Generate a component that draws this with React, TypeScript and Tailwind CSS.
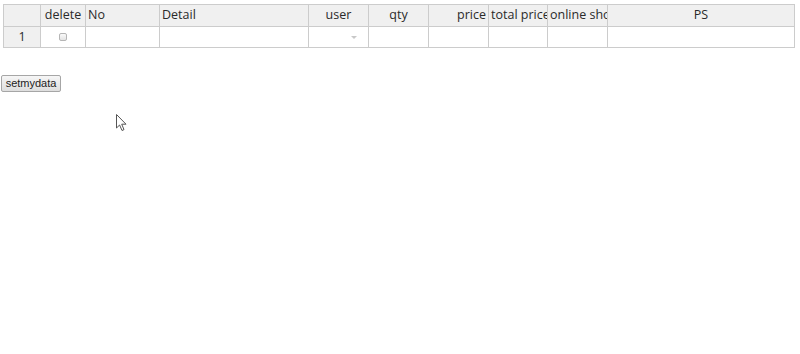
const columns = [
  { title: "delete", w: "w-[45px]", align: "justify-center" },
  { title: "No", w: "w-[74px]", align: "justify-start pl-[2px]" },
  { title: "Detail", w: "w-[149px]", align: "justify-start pl-[2px]" },
  { title: "user", w: "w-[60px]", align: "justify-center" },
  { title: "qty", w: "w-[60px]", align: "justify-center" },
  { title: "price", w: "w-[60px]", align: "justify-end pr-[2px]" },
  { title: "total price", w: "w-[59px]", align: "justify-start pl-[2px]" },
  { title: "online shop", w: "w-[60px]", align: "justify-start pl-[2px]" },
  { title: "PS", w: "w-[187px]", align: "justify-center" },
];

const Cursor = () => (
  <svg
    className="absolute left-[116px] top-[114px]"
    width="11"
    height="18"
    viewBox="0 0 11 18"
  >
    <path
      d="M0.5 0.5 L0.5 14 L3.6 11 L6 16.5 L8 15.6 L5.7 10.2 L10 10.2 Z"
      fill="#fff"
      stroke="#555"
      strokeWidth="1"
      strokeLinejoin="round"
    />
  </svg>
);

export default function App() {
  return (
    <div className="relative w-[800px] h-[354px] bg-white font-['Open_Sans',sans-serif] text-[12.5px] text-[#2a2a2a]">
      <div className="pt-[4px] pl-[3px]">
        <div className="inline-flex flex-col border-l border-t border-[#cccccc]">
          {/* header row */}
          <div className="flex h-[22px]">
            <div className="w-[37px] bg-[#f0f0f0] border-r border-b border-[#cccccc]" />
            {columns.map((c) => (
              <div
                key={c.title}
                className={`${c.w} ${c.align} flex items-center overflow-hidden whitespace-nowrap bg-[#f0f0f0] border-r border-b border-[#cccccc] leading-none`}
              >
                {c.title}
              </div>
            ))}
          </div>
          {/* data row */}
          <div className="flex h-[21px]">
            <div className="w-[37px] flex items-center justify-center bg-[#f0f0f0] border-r border-b border-[#cccccc] leading-none">
              1
            </div>
            {columns.map((c) => (
              <div
                key={c.title}
                className={`${c.w} relative flex items-center justify-center bg-white border-r border-b border-[#cccccc]`}
              >
                {c.title === "delete" && (
                  <span className="block w-[8px] h-[8px] rounded-[2px] border border-[#b5b5b5] bg-gradient-to-b from-[#fafafa] to-[#e4e4e4]" />
                )}
                {c.title === "user" && (
                  <span className="absolute right-[11px] top-[9px] w-0 h-0 border-l-[3px] border-r-[3px] border-t-[3px] border-l-transparent border-r-transparent border-t-[#c8c8c8]" />
                )}
              </div>
            ))}
          </div>
        </div>
      </div>

      <div className="pl-[1px] pt-[26px]">
        <button className="h-[17px] w-[60px] rounded-[2px] border border-[#a6a6a6] bg-gradient-to-b from-[#f6f6f6] to-[#dedede] font-['Liberation_Sans',sans-serif] text-[11px] leading-none text-[#222]">
          setmydata
        </button>
      </div>

      <Cursor />
    </div>
  );
}
